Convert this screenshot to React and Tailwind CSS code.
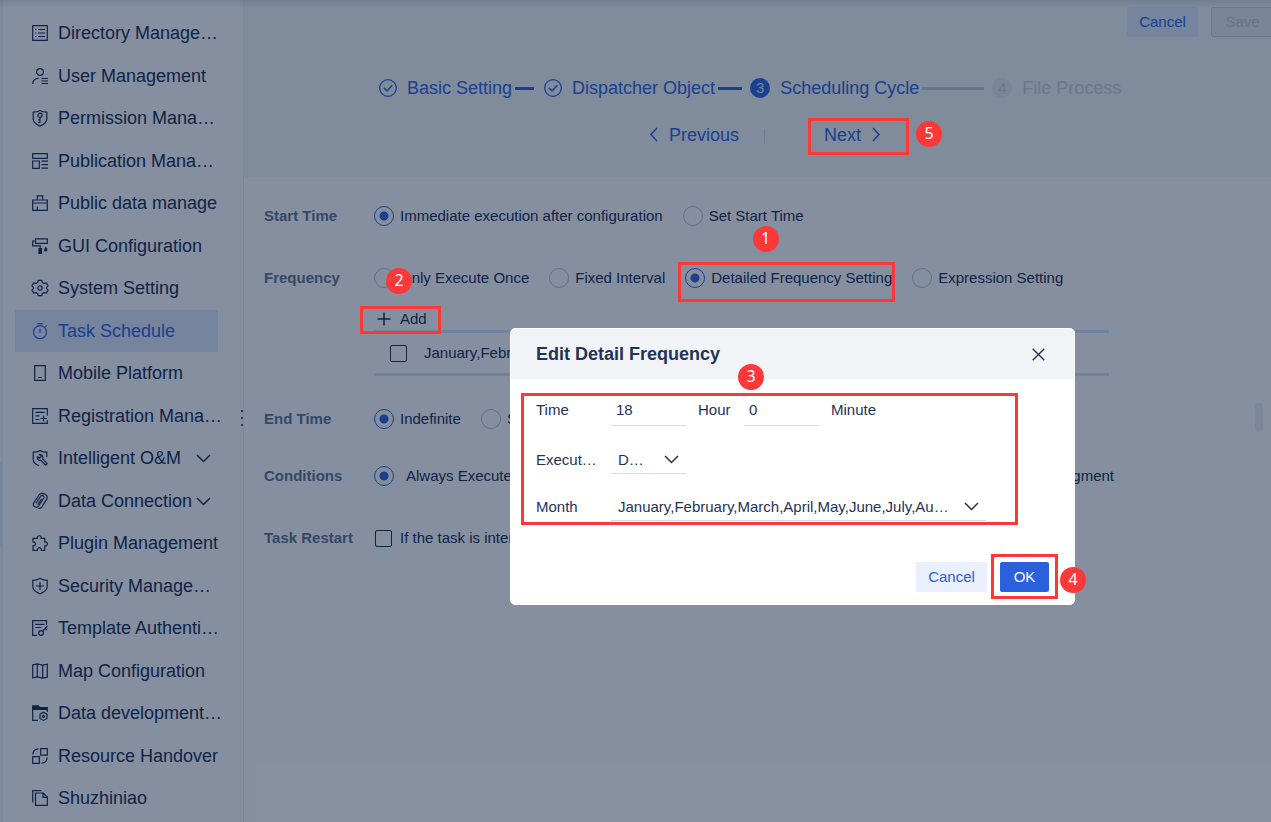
import { clsx } from 'clsx'

const ICONS = {
  directory: (
    <>
      <path d="M.7.7h14.6v14.6H.7z" />
      <path d="M3.2 4.5h1.2M3.2 8h1.2M3.2 11.5h1.2M6 4.5h7M6 8h7M6 11.5h7" />
    </>
  ),
  user: (
    <>
      <circle cx="8" cy="4" r="3.4" />
      <path d="M.7 16c.2-3.3 2.2-5.4 6-5.8M9.500 10.5H16M9.5 13H16M9.5 15.5H16" />
    </>
  ),
  permission: (
    <>
      <path d="M8 .4c2 1.2 4.2 1.7 6.8 1.7v7c0 3.4-2.7 5.3-6.800 7-4.100-1.700-6.800-3.600-6.800-7v-7C3.8 2.1 6 1.6 8 .4z" />
      <circle cx="8" cy="5.3" r="2.1" />
      <path d="M8 7.5v5.3M8 9.8H6.2M8 12.5H6" />
    </>
  ),
  publication: (
    <path d="M.7.7h14.6v4.6H.7zM.7 8h6.6v7.3H.7zM9.5 8.2H16M9.5 11.7H16M9.5 15.2H16" />
  ),
  publicData: <path d="M.7 5h14.6v10.3H.7zM5.3 5V.8h5.4V5M.7 8h14.6M5.3 11.5v3.8" />,
  gui: (
    <>
      <path d="M3.5.8h11.8v4.5H3.5zM3.5 3H.7v4.8h7.5V10" />
      <path d="M7 10.5h2.5v5H7zM13.8 9.5c1.4 1.9 1.4 3.4 0 3.4s-1.4-1.5 0-3.4z" fill="currentColor" />
    </>
  ),
  system: (
    <>
      <path
        d="M6.300.3h3.400l.7 2.2 1.600.9 2.300-.5 1.700 2.900-1.500 1.700v1l1.500 1.700-1.700 2.900-2.300-.5-1.600.9-.7 2.200H6.300l-.7-2.200-1.600-.9-2.300.5L0 10.200l1.500-1.700v-1L0 5.800l1.700-2.900 2.300.5 1.600-.9z"
        strokeLinejoin="round"
      />
      <circle cx="8" cy="8" r="2.200" />
    </>
  ),
  task: (
    <>
      <circle cx="8" cy="9.2" r="6.5" />
      <path d="M5.3.6h5.4M8 6v4M13.2 3.8l1.5-1.5" />
    </>
  ),
  mobile: <path d="M2.7.7h10.6v14.6H2.7zM6 12.5h4" />,
  registration: (
    <path d="M15.3 7.5V.7H.7v14.6h14.6v-3M3.5 4.3h9M3.5 7.8h4M3.5 11.5h4M11.5 7.500v6M8.5 10.5H15" />
  ),
  intelligent: (
    <>
      <path d="M14.8 7V2.200C12.2 2.2 10 1.7 8 .6 6 1.7 3.8 2.2 1.2 2.2v7C1.2 12.5 3.5 14.5 7 15.7" />
      <path d="M8.7 10.2l4.8 4.9 1.7-1.5-4.5-4.700c.9-2.3-.7-4.7-3.2-4.400l1.600 1.900-1.600 1.700-2-1.400c-.6 2.4 1 4.2 3.2 3.500z" />
    </>
  ),
  connection: (
    <path d="M4 10.2L8.800 3c1.3-1.7 4.1.1 3 2L6.6 13c-2 2.8-6.7.2-4.9-3L7 2c2.7-3.7 9.8-.2 7.8 4.2L9.7 14.1c-.7 1-2 1.500-3.200 1.200M9.500 6L5.800 11.700" />
  ),
  plugin: (
    <path d="M1 3.3h4.300c-.6-3.4 4.4-3.4 3.9 0h3.600V7c3.500-.7 3.5 4.5 0 3.8v4.500H9.300c.4-3.500-4.300-3.500-3.900 0H1v-4.500c3.300.4 3.300-4.200 0-3.800z" />
  ),
  security: (
    <>
      <path d="M8 .5c2.2 1.2 4.5 1.8 7.2 1.8v6.5c0 3.5-3 5.4-7.200 7-4.200-1.600-7.200-3.500-7.200-7V2.300C3.500 2.300 5.800 1.700 8 .5z" />
      <path d="M8 4v8M4 8h8" />
    </>
  ),
  template: (
    <>
      <path d="M14.5 5V.7H.7v14.6H5M3.3 4.3h9M3.3 7.5h6" />
      <circle cx="9" cy="13" r="2.4" />
      <path d="M10.5 11.2L15.5 6M13 8.3l2 1.7" />
    </>
  ),
  map: <path d="M.7 1.8l4.6-1 5.4 1.400 4.600-1v13l-4.600 1-5.400-1.400-4.600 1zM5.300.8v13M10.700 2.200v13" />,
  development: (
    <>
      <path d="M.7 3V15.3H6M.7 4.5h14.6V7" />
      <path d="M.7.9h5.6l1.5 1.8h7.5v1.6H.7z" fill="currentColor" />
      <path d="M11.5 7.2l3.5 2v4.2l-3.5 2-3.500-2V9.200z" />
      <circle cx="11.5" cy="11.3" r="1" />
    </>
  ),
  handover: <path d="M8.7.7h6.6v6.5H8.7zM.7 8.700h6.6v6.6H.7zM.8 6.5C.9 3 3 1 6.5.8M15.2 9.5c-.2 3.5-2.2 5.5-5.7 5.7" />,
  documents: <path d="M3.5 3h7.8l4 4v8.3H3.5zM11 3v4.3h4.2M.7 12.5V.7h8.8" />,
}

const MENU = [
  { icon: 'directory', label: 'Directory Manage…' },
  { icon: 'user', label: 'User Management' },
  { icon: 'permission', label: 'Permission Mana…' },
  { icon: 'publication', label: 'Publication Mana…' },
  { icon: 'publicData', label: 'Public data manage' },
  { icon: 'gui', label: 'GUI Configuration' },
  { icon: 'system', label: 'System Setting' },
  { icon: 'task', label: 'Task Schedule', active: true },
  { icon: 'mobile', label: 'Mobile Platform' },
  { icon: 'registration', label: 'Registration Mana…' },
  { icon: 'intelligent', label: 'Intelligent O&M', expandable: true },
  { icon: 'connection', label: 'Data Connection', expandable: true },
  { icon: 'plugin', label: 'Plugin Management' },
  { icon: 'security', label: 'Security Manage…' },
  { icon: 'template', label: 'Template Authenti…' },
  { icon: 'map', label: 'Map Configuration' },
  { icon: 'development', label: 'Data development…' },
  { icon: 'handover', label: 'Resource Handover' },
  { icon: 'documents', label: 'Shuzhiniao' },
]

function Chevron({ direction = 'down', className }) {
  const paths = {
    down: { d: 'M1 1l6.5 6.5L14 1', box: '0 0 15 9', size: 'h-[9px] w-[15px]' },
    left: { d: 'M8 1L2 7.5 8 14', box: '0 0 9 15', size: 'h-[15px] w-[9px]' },
    right: { d: 'M1 1l6 6.5L1 14', box: '0 0 9 15', size: 'h-[15px] w-[9px]' },
  }
  const { d, box, size } = paths[direction]

  return (
    <svg viewBox={box} fill="none" stroke="currentColor" strokeWidth="1.5" className={clsx('shrink-0', size, className)}>
      <path d={d} />
    </svg>
  )
}

// Numbered walkthrough markers, drawn above the dialog mask
function Badge({ number, className }) {
  return (
    <span
      className={clsx(
        'absolute z-40 flex size-[26px] items-center justify-center rounded-full bg-[#fc3838] pb-[3px] font-["Noto_Sans"] text-base leading-none text-white',
        className
      )}
    >
      {number}
    </span>
  )
}

function Highlight({ className }) {
  return <span className={clsx('pointer-events-none absolute z-40 border-3 border-[#fc3838]', className)} />
}

function Sidebar() {
  return (
    <aside className="relative w-[244px] shrink-0 border-r border-[#ebeff5] bg-white pt-3 pl-[15px]">
      <div className="absolute inset-y-0 left-0 w-[3px] border-r border-[#eaf0f8] bg-[#f4f7fa]" />
      <div className="absolute top-[462px] left-0 h-[85px] w-[2px] bg-[#e0e8fd]" />
      <nav>
        <ul>
          {MENU.map((item) => (
            <li key={item.label} className="odd:mb-px">
              <a
                href="#"
                className={clsx(
                  'flex h-[42px] w-[203px] items-center pl-[17px] text-lg whitespace-nowrap',
                  item.active ? 'bg-[#e0e8fd] text-[#2b60dc]' : 'text-[#13264f]'
                )}
              >
                <svg viewBox="0 0 16 16" fill="none" stroke="currentColor" strokeWidth="1.2" className="mr-[10px] size-4 shrink-0 overflow-visible">
                  {ICONS[item.icon]}
                </svg>
                <span>{item.label}</span>
                {item.expandable ? <Chevron className="mr-[7px] ml-auto" /> : null}
              </a>
            </li>
          ))}
        </ul>
      </nav>
      <div className="absolute top-[410px] right-0 flex flex-col gap-[5px]">
        <i className="size-[2px] bg-[#3c4c70]" />
        <i className="size-[2px] bg-[#3c4c70]" />
        <i className="size-[2px] bg-[#3c4c70]" />
      </div>
    </aside>
  )
}

function DoneIcon() {
  return (
    <svg viewBox="0 0 18 18" fill="none" stroke="currentColor" strokeWidth="1.3" className="size-[18px] shrink-0">
      <circle cx="9" cy="9" r="8.3" />
      <path d="M4.8 8.7l3.2 3.1 5.4-5.5" strokeWidth="1.6" />
    </svg>
  )
}

function Header() {
  return (
    <header className="overflow-hidden bg-[#f4f6f8] pt-[7px] pb-[22px] text-[#2b60dc]">
      <div className="-mr-[11px] flex justify-end gap-[13px] text-[15px]">
        <button type="button" className="h-[30px] w-[71px] rounded-xs bg-[#e0e8fb]">
          Cancel
        </button>
        <button type="button" disabled className="h-[30px] w-[71px] rounded-xs border border-[#cad2da] bg-[#e6eaf0] pr-2 text-[#c4cad2]">
          Save
        </button>
      </div>
      <ol className="mt-[39px] flex h-6 items-center pl-[135px] text-lg whitespace-nowrap">
        <li className="flex items-center gap-[10px]">
          <DoneIcon />
          Basic Setting
        </li>
        <li className="mr-[10px] ml-[3px] h-[3px] w-[19px] bg-[#2b60dc]" aria-hidden="true" />
        <li className="flex items-center gap-[10px]">
          <DoneIcon />
          Dispatcher Object
        </li>
        <li className="mr-2 ml-[3px] h-[3px] w-6 bg-[#2b60dc]" aria-hidden="true" />
        <li className="flex items-center gap-[10px]">
          <span className="flex size-5 items-center justify-center rounded-full bg-[#2b60dc] text-[15px] text-[#dfe6f5]">3</span>
          Scheduling Cycle
        </li>
        <li className="mr-2 ml-[3px] h-[3px] w-[62px] bg-[#c0c8d8]" aria-hidden="true" />
        <li className="flex items-center gap-[10px] text-[#cbd1dc]">
          <span className="flex size-5 items-center justify-center rounded-full bg-[#e6eaf0] text-[15px]">4</span>
          File Process
        </li>
      </ol>
      <div className="mt-[18px] flex h-[37px] items-center pl-[405px] text-lg">
        <button type="button" className="flex items-center gap-[11px] pb-1">
          <Chevron direction="left" />
          Previous
        </button>
        <span className="ml-[25px] h-[15px] w-px bg-[#d0d6de]" />
        <div className="relative ml-[43px] flex h-[37px] w-[101px] items-center pl-4">
          <button type="button" className="flex items-center gap-[11px] pb-1">
            Next
            <Chevron direction="right" />
          </button>
          <Highlight className="inset-0" />
          <Badge number={5} className="top-[3px] left-[108px]" />
        </div>
      </div>
    </header>
  )
}

function Field({ label, className, children }) {
  return (
    <div role="group" aria-label={label} className={clsx('flex', className)}>
      <span className="w-[110px] shrink-0 text-[15px] leading-5 font-bold text-[#5f6f8f]">{label}</span>
      <div className="min-w-0 flex-1">{children}</div>
    </div>
  )
}

function Radio({ name, label, checked, wide, children }) {
  return (
    <label className={clsx('relative flex items-center whitespace-nowrap', wide ? 'gap-3' : 'gap-1.5')}>
      <input
        type="radio"
        name={name}
        defaultChecked={checked}
        className="size-5 shrink-0 appearance-none rounded-full border border-[#b4c0d6] checked:border-[#2b60dc] checked:bg-[radial-gradient(circle,#2b60dc_4px,transparent_5px)]"
      />
      {label}
      {children}
    </label>
  )
}

const checkboxClass = 'shrink-0 size-[17px] appearance-none rounded-xs border border-[#13264f]'

function ScheduleForm() {
  return (
    <form className="pt-[29px] pl-5 text-[15px] leading-5 text-[#13264f]">
      <Field label="Start Time">
        <div className="flex gap-5">
          <Radio name="start" label="Immediate execution after configuration" checked />
          <Radio name="start" label="Set Start Time">
            <Badge number={1} className="top-5 left-[70px]" />
          </Radio>
        </div>
      </Field>
      <Field label="Frequency" className="mt-[42px]">
        <div className="flex gap-5">
          <Radio name="frequency" label="Only Execute Once">
            <Badge number={2} className="top-0 left-3" />
          </Radio>
          <Radio name="frequency" label="Fixed Interval" />
          <Radio name="frequency" label="Detailed Frequency Setting" checked>
            <Highlight className="-top-1.5 -right-[3px] -bottom-[14px] -left-[7px]" />
          </Radio>
          <Radio name="frequency" label="Expression Setting" />
        </div>
        <div className="relative mt-5 flex h-[22px] w-[67px] items-center">
          <button type="button" className="flex items-center gap-[9px] pl-[3px]">
            <svg viewBox="0 0 14 14" stroke="currentColor" strokeWidth="1.5" className="size-[14px]">
              <path d="M7 .5v13M.5 7h13" />
            </svg>
            Add
          </button>
          <Highlight className="-inset-y-[2px] right-0 -left-[14px] h-7" />
        </div>
        <div className="mr-[162px] flex items-center gap-[17px] border-y-3 border-[#d2e6fc] py-[10px] pl-4">
          <input id="frequency-row" type="checkbox" className={checkboxClass} />
          <label htmlFor="frequency-row" className="truncate">
            January,February
          </label>
        </div>
      </Field>
      <Field label="End Time" className="mt-[33px]">
        <div className="flex gap-5">
          <Radio name="end" label="Indefinite" checked />
          <Radio name="end" label="Set End Time" />
        </div>
      </Field>
      <Field label="Conditions" className="mt-[37px]">
        <div className="mr-[157px] flex justify-between">
          <Radio name="condition" label="Always Execute" checked wide />
          <Radio name="condition" label="Parameter Judgment" wide />
        </div>
      </Field>
      <Field label="Task Restart" className="mt-[42px]">
        <label className="flex items-center gap-2 pl-px">
          <input type="checkbox" className={checkboxClass} />
          If the task is interrupted, restart it
        </label>
      </Field>
    </form>
  )
}

function Select({ id, value, className }) {
  return (
    <span className={clsx('relative flex h-7 items-center border-b border-[#d8dce2]', className)}>
      <select id={id} className="h-full w-full appearance-none bg-transparent pr-8 pl-[7px] outline-none">
        <option>{value}</option>
      </select>
      <Chevron className="pointer-events-none absolute right-[7px]" />
    </span>
  )
}

function FrequencyDialog() {
  return (
    <section
      role="dialog"
      aria-labelledby="dialog-title"
      className="absolute top-[328px] left-[510px] z-30 w-[565px] rounded-[5px] border border-white bg-white text-[15px] leading-5 text-[#1f3358]"
    >
      <header className="flex h-[50px] items-center justify-between rounded-t bg-[#f2f3f7] pr-[29px] pl-[25px]">
        <h2 id="dialog-title" className="text-lg font-bold">
          Edit Detail Frequency
        </h2>
        <button type="button" aria-label="Close">
          <svg viewBox="0 0 13 13" stroke="currentColor" strokeWidth="1.4" className="size-[13px]">
            <path d="M.7.7l11.6 11.6M12.3.7L.7 12.3" />
          </svg>
        </button>
      </header>
      <Badge number={3} className="top-[35px] left-[227px]" />
      <div className="relative mt-[14px] ml-[10px] h-[132px] w-[497px] pl-[15px]">
        <div className="flex h-[33px] items-center">
          <label htmlFor="hour" className="w-[75px]">
            Time
          </label>
          <input id="hour" defaultValue="18" className="h-[33px] w-[75px] border-b border-[#d8dce2] px-[5px] outline-none" />
          <label htmlFor="hour" className="w-[58px] pl-3">
            Hour
          </label>
          <input id="minute" defaultValue="0" className="h-[33px] w-[75px] border-b border-[#d8dce2] px-[5px] outline-none" />
          <label htmlFor="minute" className="pl-3">
            Minute
          </label>
        </div>
        <div className="mt-5 flex h-7 items-center">
          <label htmlFor="execute" className="w-[75px]">
            Execut…
          </label>
          <Select id="execute" value="D…" className="w-[75px]" />
        </div>
        <div className="mt-[19px] flex h-7 items-center">
          <label htmlFor="month" className="w-[75px]">
            Month
          </label>
          <Select id="month" value="January,February,March,April,May,June,July,Au…" className="w-[375px]" />
        </div>
        <Highlight className="inset-0" />
      </div>
      <footer className="flex items-center justify-end gap-[13px] pt-[37px] pr-[25px] pb-3">
        <button type="button" className="h-[30px] w-[71px] rounded-xs bg-[#e9effb] text-[#2b60dc]">
          Cancel
        </button>
        <div className="relative">
          <button type="button" className="h-[30px] w-[49px] rounded-xs bg-[#2b60dc] text-white">
            OK
          </button>
          <Highlight className="-top-2 -right-[9px] -left-[9px] h-[45px]" />
          <Badge number={4} className="top-[5px] left-[60px]" />
        </div>
      </footer>
    </section>
  )
}

export default function App() {
  return (
    <div className="relative flex min-h-screen overflow-hidden bg-white font-['Liberation_Sans',sans-serif]">
      <Sidebar />
      <main className="relative min-w-0 flex-1">
        <Header />
        <ScheduleForm />
        <div className="absolute top-[403px] right-2 h-[29px] w-2 rounded-full bg-[#eceff4]" />
      </main>
      <div className="absolute inset-x-0 top-0 h-2 bg-linear-to-b from-[#6b7c94]/20 to-transparent" />
      <div className="absolute inset-0 z-20 bg-[#0c2040]/50" />
      <FrequencyDialog />
    </div>
  )
}
